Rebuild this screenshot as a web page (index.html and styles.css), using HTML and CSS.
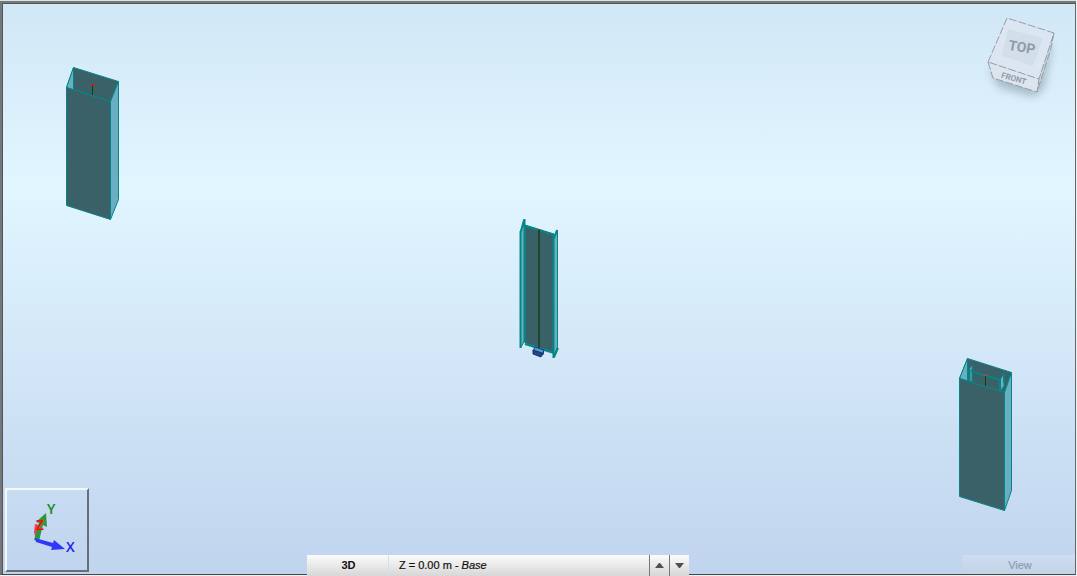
FILE: index.html
```html
<!DOCTYPE html>
<html lang="en">
<head>
  <meta charset="UTF-8" />
  <meta name="viewport" content="width=device-width, initial-scale=1.0" />
  <title>3D View</title>
  <link rel="stylesheet" href="styles.css">
</head>
<body>
  <div class="window-edge"></div>

  <main class="viewport">
    <!-- Columns -->
    <svg class="model column-left" width="56" height="156" viewBox="64 66 56 156">
      <polygon class="dark" points="73.500,67.500 118.500,81.500 110.500,101.500 66.500,87.500" />
      <polygon class="light" points="73.500,67.500 66.500,87.500 73.500,90" />
      <polygon class="light" points="110.500,101.500 118.500,81.500 118.500,199.500 110.500,219.500" />
      <polygon class="dark" points="66.500,87.500 110.500,101.500 110.500,219.500 66.500,205.500" />
      <path class="axis" d="M92.500 86v9" />
      <path class="node" d="M91 84h3v2h-3z" />
    </svg>

    <svg class="model column-center" width="44" height="146" viewBox="518 216 44 146">
      <polygon class="dark" points="525,225 554,234 554,352 525,343" />
      <path class="edge-wide" d="M525 226l29 9M525 344l29 9" />
      <polygon class="light" points="524.500,219 524.500,341 520.500,348 520.500,232" />
      <path class="edge-wide" d="M520.500 231v117M524.500 219v123M521 231l3-11" />
      <polygon class="light" points="557.500,230 557.500,347 553.500,358 553.500,240" />
      <path class="edge-wide" d="M553.500 235v123M554 238l3-8M554 357l4-9" />
      <path class="axis-wide" d="M539 230v118" />
      <path class="node" d="M538 229h2v1h-2z" />
      <polygon class="support-top" points="535,347 544,350 543,354 533,351" />
      <polygon class="support" points="533,350 542,353 541,357 533,354" />
      <path class="support-side" d="M542 353l2-3v4l-3 3z" />
    </svg>

    <svg class="model column-right" width="56" height="156" viewBox="957 356 56 156">
      <polygon class="dark" points="967.500,358.500 1011.500,372.500 1004.500,392.500 959.500,378.500" />
      <polygon class="light" points="967.500,358.500 959.500,378.500 967.500,381" />
      <path class="light" d="M969 369l3-4v17l-3-1zM1000 380l4-7v13l-3 5z" />
      <path class="edge-wide" d="M969.500 369v12M971 371l29 9M1000 379v12M1004 374v9" />
      <polygon class="light" points="1004.500,392.500 1011.500,372.500 1011.500,490.500 1004.500,510.500" />
      <polygon class="dark" points="959.500,378.500 1004.500,392.500 1004.500,510.500 959.500,496.500" />
      <path class="axis" d="M985.500 376v10" />
      <path class="node-muted" d="M984 374h3v2h-3z" />
    </svg>

    <!-- View cube -->
    <svg class="view-cube" width="78" height="92" viewBox="980 12 78 92">
      <polygon class="cube-shadow" points="990,70 1052,44 1044,88 1034,97 998,87" />
      <polygon class="cube-face" points="1007,18 1054,33 1039,79 988,62" />
      <polygon class="cube-inner" points="1008,29 1043,38 1033,66 1002,56" />
      <polygon class="cube-front" points="988,62 1039,79 1037,92 993,78" />
      <path class="cube-side" d="M1039 79l15-46-3 15-14 44z" />
      <path class="cube-edges" d="M988 62L1007 18L1054 33L1039 79ZM988 62l5 16 44 14 2-13M1054 33l-3 15-14 44" />
      <text class="cube-top-text" transform="translate(1021 52) rotate(10)">TOP</text>
      <text class="cube-front-text" transform="translate(1013 81) rotate(16)">FRONT</text>
    </svg>

    <!-- Axis triad -->
    <div class="triad">
      <svg width="80" height="80" viewBox="7 490 80 80">
        <path class="z-axis" d="M36 540l-2-8 1-8 5 1-3 14z" />
        <path class="y-axis" d="M38 541l-4-1 5-17-3-1 10-9 1 14-4-2-4 16z" />
        <path class="x-axis" d="M35 538l18 5 1-3 11 9-14 1 1-3-16-5z" />
        <text class="z-label" x="36" y="530">Z</text>
        <text class="y-label" x="47" y="514">Y</text>
        <text class="x-label" x="66" y="552">X</text>
      </svg>
    </div>
  </main>

  <footer class="toolbar">
    <button class="mode" type="button">3D</button>
    <button class="level" type="button">Z = 0.00 m - <em>Base</em></button>
    <button class="step" type="button" aria-label="Level up">
      <svg width="9" height="5" viewBox="0 0 9 5"><path d="M0 5l4-5h1l4 5z" /></svg>
    </button>
    <button class="step" type="button" aria-label="Level down">
      <svg width="9" height="5" viewBox="0 0 9 5"><path d="M0 0h9L5 5H4z" /></svg>
    </button>
  </footer>
  <button class="view-tab" type="button">View</button>
</body>
</html>
```

FILE: styles.css
```css
html, body {
  height: 100%;
  margin: 0;
}

body {
  position: relative;
  display: flex;
  flex-direction: column;
  box-sizing: border-box;
  padding: 0 1px 1px 0;
  overflow: hidden;
  background: #f0f0ee;
  font-family: "Liberation Sans", Arial, sans-serif;
  font-size: 11px;
}

.window-edge {
  height: 1px;
  background: #dde2df;
}

.viewport {
  position: relative;
  flex: 1;
  border-style: solid;
  border-width: 2px 1px 1px 2px;
  border-color: #747879 #62666a #44484c #747879;
  background: linear-gradient(#d2e7f6, #e1f6ff 32%, #c0d4ee);
  box-shadow: inset 1px 1px #50565a;
}

/* model */
.model,
.view-cube,
.triad {
  position: absolute;
}

.column-left {
  left: 62px;
  top: 63px;
}

.column-center {
  left: 516px;
  top: 213px;
}

.column-right {
  right: 62px;
  top: 353px;
}

.dark {
  fill: #3a6068;
}

.light {
  fill: #68b0c1;
}

.dark,
.light {
  stroke: #078586;
  stroke-linejoin: round;
}

.edge-wide {
  fill: none;
  stroke: #078586;
  stroke-width: 2;
}

.axis,
.axis-wide {
  stroke: #0b410d;
}

.axis-wide {
  stroke: #164a2a;
  stroke-width: 2;
}

.node {
  fill: #f00c0c;
}

.node-muted {
  fill: #a04a50;
}

.support {
  fill: #264878;
  stroke: #12357a;
}

.support-top {
  fill: #5c95cc;
  stroke: #12448a;
}

.support-side {
  fill: #17427f;
}

/* view cube */
.view-cube {
  right: 17px;
  top: 9px;
}

.cube-shadow {
  fill: #5d707f;
  opacity: .4;
  filter: blur(4px);
}

.cube-face {
  fill: #dce6f2;
}

.cube-inner {
  fill: #d2dfe9;
}

.cube-front {
  fill: #dce5ef;
}

.cube-side {
  fill: #ccd8e3;
}

.cube-edges {
  fill: none;
  stroke: #969da4;
  stroke-dasharray: 8 2;
}

.cube-top-text,
.cube-front-text {
  fill: #8f9ca8;
  font-family: Roboto, sans-serif;
  font-weight: bold;
  text-anchor: middle;
}

.cube-top-text {
  font-size: 14px;
}

.cube-front-text {
  font-size: 8px;
}

/* axis triad */
.triad {
  left: 3px;
  bottom: 2px;
  border: 2px solid;
  border-color: #f4f8fc #65707c #65707c #f4f8fc;
}

.triad svg {
  display: block;
}

.triad text {
  font-family: "Open Sans", sans-serif;
  font-size: 14px;
  font-weight: 600;
}

.x-axis {
  fill: #3039fa;
}

.y-axis {
  fill: #2f963f;
}

.z-axis {
  fill: #ee4057;
}

.triad .x-label {
  fill: #2222ee;
}

.triad .y-label {
  fill: #118822;
}

.triad .z-label {
  fill: #ff0909;
}

/* bottom controls */
button {
  padding: 0;
  border: 0;
  font: inherit;
}

.toolbar {
  position: absolute;
  left: 28.5%;
  bottom: 0;
  display: flex;
  width: 382px;
  height: 21px;
}

.toolbar button {
  padding-bottom: 2px;
  background: linear-gradient(#fbfbfb, #d7d7d7);
  color: #111;
}

.toolbar .mode {
  width: 82px;
  padding-left: 2px;
  border-right: 1px solid #d0e1f2;
  font-weight: bold;
}

.toolbar .level {
  flex: 1;
  padding-left: 10px;
  text-align: left;
  -webkit-text-stroke: 0.2px #111;
}

.toolbar .step {
  width: 20px;
  padding-bottom: 4px;
  border-left: 1px solid #777;
}

.step svg {
  fill: #505050;
}

.view-tab {
  position: absolute;
  right: 2px;
  bottom: 2px;
  width: 113px;
  height: 19px;
  padding-left: 3px;
  background: linear-gradient(#ccdef0, #c2d3e6);
  color: #8d9cb0;
  -webkit-text-stroke: 0.2px #8d9cb0;
}
```
